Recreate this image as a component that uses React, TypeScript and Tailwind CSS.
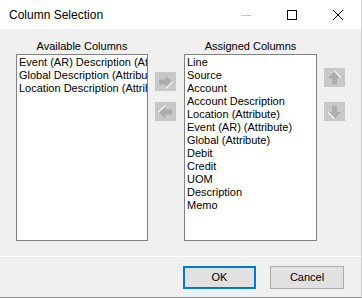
import React from 'react';

const available = [
  'Event (AR) Description (Attribute)',
  'Global Description (Attribute)',
  'Location Description (Attribute)',
];

const assigned = [
  'Line',
  'Source',
  'Account',
  'Account Description',
  'Location (Attribute)',
  'Event (AR) (Attribute)',
  'Global (Attribute)',
  'Debit',
  'Credit',
  'UOM',
  'Description',
  'Memo',
];

// greyed-out arrow buttons, direction picks the rotation
function ArrowButton({ dir }: { dir: 'right' | 'left' | 'up' | 'down' }) {
  const rot = { right: 0, left: 180, up: -90, down: 90 }[dir];
  return (
    <div className="w-[21px] h-[19px] bg-[#c8c8c8] flex items-center justify-center">
      <svg width="15" height="14" viewBox="0 0 15 14" style={{ transform: `rotate(${rot}deg)` }}>
        <path d="M1 4.5h6.5V0.5L14.5 7l-7 6.5V9.5H1z" fill="#acacac" />
        <path d="M7.5 13.5L14.5 7" stroke="#f6f6f6" strokeWidth="1.3" fill="none" />
      </svg>
    </div>
  );
}

function ListBox({ items, width }: { items: string[]; width: string }) {
  return (
    <div className={`${width} h-[187px] mt-[1px] bg-white border border-[#828282] pt-[1px] pl-[2px] overflow-hidden`}>
      {items.map((t) => (
        <div key={t} className="h-[13px] leading-[13px] whitespace-nowrap">
          {t}
        </div>
      ))}
    </div>
  );
}

export default function App() {
  return (
    <div
      className="w-[362px] h-[298px] bg-white border-r border-b border-r-[#cfcfcf] border-b-[#8c8c8c] text-black text-[11px] flex flex-col"
      style={{ fontFamily: '"Liberation Sans", Arial, sans-serif' }}
    >
      {/* title bar */}
      <div className="h-[29px] flex items-center bg-white">
        <div className="pl-[9px] text-[12px]">Column Selection</div>
        <div className="ml-auto flex h-full">
          <div className="w-[46px] flex items-center justify-center">
            <svg width="10" height="10" viewBox="0 0 10 10">
              <path d="M0 5.5h10" stroke="#c4c4c4" strokeWidth="1" />
            </svg>
          </div>
          <div className="w-[46px] flex items-center justify-center">
            <svg width="10" height="10" viewBox="0 0 10 10">
              <rect x="0.5" y="0.5" width="9" height="9" stroke="#000" fill="none" strokeWidth="1" />
            </svg>
          </div>
          <div className="w-[46px] flex items-center justify-center">
            <svg width="10" height="10" viewBox="0 0 10 10">
              <path d="M0 0l10 10M10 0L0 10" stroke="#000" strokeWidth="1" />
            </svg>
          </div>
        </div>
      </div>

      {/* body */}
      <div className="h-[227px] bg-[#f0f0f0] flex pl-[16px] pt-[10px]">
        <div className="flex flex-col">
          <div className="h-[14px] leading-[14px] text-center">Available Columns</div>
          <ListBox items={available} width="w-[132px]" />
        </div>
        <div className="ml-[7px] pt-[33px] flex flex-col gap-[11px]">
          <ArrowButton dir="right" />
          <ArrowButton dir="left" />
        </div>
        <div className="ml-[8px] flex flex-col">
          <div className="h-[14px] leading-[14px] text-center">Assigned Columns</div>
          <ListBox items={assigned} width="w-[133px]" />
        </div>
        <div className="ml-[7px] pt-[29px] flex flex-col gap-[15px]">
          <ArrowButton dir="up" />
          <ArrowButton dir="down" />
        </div>
      </div>

      {/* footer */}
      <div className="h-px bg-white" />
      <div className="flex-1 bg-[#f0f0f0] flex justify-end items-start pt-[9px] pr-[17px] gap-[14px]">
        <button className="w-[73px] h-[23px] bg-[#e1e1e1] border-2 border-[#0078d7] text-[11px]">OK</button>
        <button className="w-[74px] h-[23px] bg-[#e1e1e1] border border-[#adadad] text-[11px]">Cancel</button>
      </div>
    </div>
  );
}
